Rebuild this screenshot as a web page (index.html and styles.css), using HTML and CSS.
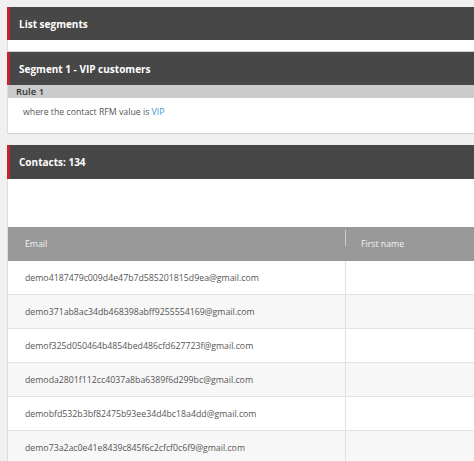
FILE: index.html
```html
<!DOCTYPE html>
<html>
<head>
<meta charset="utf-8">
<link rel="stylesheet" href="styles.css">
</head>
<body>
<div class="page">
  <section class="panel panel-top">
    <div class="bar">List segments</div>
    <div class="spacer"></div>
  </section>
  <section class="panel panel-seg">
    <div class="bar">Segment 1 - VIP customers</div>
    <div class="rule-title">Rule 1</div>
    <div class="rule-body">where the contact RFM value is <a class="link">VIP</a></div>
  </section>
  <section class="panel panel-contacts">
    <div class="bar">Contacts: 134</div>
    <div class="blank"></div>
    <div class="table">
      <div class="thead">
        <div class="th th-email">Email</div>
        <div class="th th-first"><span class="sep"></span>First name</div>
      </div>
      <div class="row"><div class="td td-email">demo4187479c009d4e47b7d585201815d9ea@gmail.com</div><div class="td td-first"></div></div>
      <div class="row alt"><div class="td td-email">demo371ab8ac34db468398abff9255554169@gmail.com</div><div class="td td-first"></div></div>
      <div class="row"><div class="td td-email">demof325d050464b4854bed486cfd627723f@gmail.com</div><div class="td td-first"></div></div>
      <div class="row alt"><div class="td td-email">demoda2801f112cc4037a8ba6389f6d299bc@gmail.com</div><div class="td td-first"></div></div>
      <div class="row"><div class="td td-email">demobfd532b3bf82475b93ee34d4bc18a4dd@gmail.com</div><div class="td td-first"></div></div>
      <div class="row alt"><div class="td td-email">demo73a2ac0e41e8439c845f6c2cfcf0c6f9@gmail.com</div><div class="td td-first"></div></div>
    </div>
  </section>
</div>
</body>
</html>
```

FILE: styles.css
```css
html, body {
  margin: 0;
  padding: 0;
  background: #f0f0f0;
  font-family: "Open Sans", "Noto Sans", sans-serif;
  overflow: hidden;
}
.page {
  padding: 7px 0 0 7px;
}
.panel {
  background: #fff;
  border-left: 1px solid #dcdcdc;
}
.bar {
  background: #474747;
  color: #fff;
  font-weight: 700;
  font-size: 10px;
  border-left: 3px solid #c0272d;
  margin-left: -1px;
  padding-left: 9px;
  display: flex;
  align-items: center;
}
.panel-top .bar { height: 33px; }
.panel-top .spacer {
  height: 11px;
  border-bottom: 1px solid #cfcfcf;
}
.panel-seg .bar { height: 33px; }
.rule-title {
  background: #cccccc;
  height: 13px;
  line-height: 13px;
  font-size: 9.5px;
  font-weight: 600;
  color: #333;
  padding-left: 8px;
}
.rule-body {
  height: 35px;
  border-bottom: 1px solid #cfcfcf;
  font-size: 8.75px;
  color: #555;
  padding-left: 15px;
  line-height: 28px;
}
.link { color: #3a9bd0; }
.panel-contacts {
  margin-top: 11px;
}
.panel-contacts .bar { height: 34px; }
.blank { height: 48px; }
.thead {
  display: flex;
  background: #999;
  height: 34px;
  align-items: center;
  color: #f4f4f4;
  font-size: 8.75px;
  font-weight: 400;
}
.th-email { width: 337px; padding-left: 17px; box-sizing: border-box; }
.th-first { position: relative; padding-left: 16px; flex: 1; }
.sep {
  position: absolute;
  left: 0;
  top: -8px;
  height: 16px;
  border-left: 1px solid #cfcfcf;
}
.row {
  display: flex;
  height: 33px;
  border-bottom: 1px solid #e2e2e2;
  font-size: 8.75px;
  color: #555;
}
.row.alt { background: #f7f7f7; }
.td { display: flex; align-items: center; }
.td-email { width: 337px; padding-left: 17px; box-sizing: border-box; }
.td-first { flex: 1; border-left: 1px solid #e0e0e0; }
```
